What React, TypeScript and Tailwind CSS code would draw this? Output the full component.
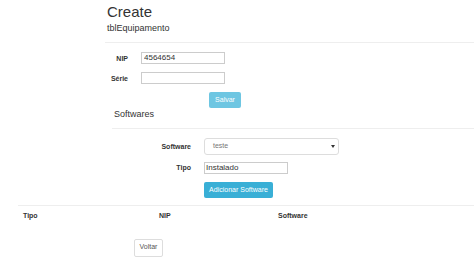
import React from 'react'

const font = { fontFamily: '"Liberation Sans", Arial, sans-serif' }

const App = () => {
  return (
    <div
      className="h-[271px] w-[474px] overflow-hidden bg-white text-[#333]"
      style={font}
    >
      {/* heading */}
      <div className="pl-[107px] pt-[3px]">
        <h2 className="text-[15px] leading-[18px]">Create</h2>
        <h4 className="mt-[2px] text-[9px] leading-[11px]">tblEquipamento</h4>
      </div>
      <hr className="ml-[105px] mt-[8px] border-t border-[#eee]" />

      {/* equipamento form */}
      <div className="mt-[9px] flex flex-col gap-[8px]">
        <div className="flex items-center">
          <label className="w-[128px] text-right text-[7px] font-bold leading-[9px]">NIP</label>
          <input
            defaultValue="4564654"
            className="ml-[13px] h-[12px] w-[84px] border border-[#ccc] px-[2px] text-[8px] text-[#333] outline-none"
          />
        </div>
        <div className="flex items-center">
          <label className="w-[128px] text-right text-[7px] font-bold leading-[9px]">Série</label>
          <input className="ml-[13px] h-[12px] w-[84px] border border-[#ccc] px-[2px] text-[8px] outline-none" />
        </div>
      </div>
      <button className="ml-[209px] mt-[8px] h-[16px] w-[32px] rounded-[2px] bg-[#6ec6e2] text-[7px] text-white">
        Salvar
      </button>

      {/* softwares */}
      <h4 className="ml-[114px] text-[9px] leading-[11px]">Softwares</h4>
      <hr className="ml-[112px] mt-[8px] border-t border-[#eee]" />

      <div className="mt-[9px] flex flex-col gap-[7px]">
        <div className="flex items-center">
          <label className="w-[191px] text-right text-[7px] font-bold leading-[9px]">Software</label>
          <div className="ml-[13px] flex h-[17px] w-[135px] items-center justify-between rounded-[3px] border border-[#ddd] pl-[8px] pr-[3px] text-[7px] text-[#777]">
            <span>teste</span>
            <svg width="4" height="3" viewBox="0 0 4 3">
              <path d="M0 0 L4 0 L2 3 Z" fill="#333" />
            </svg>
          </div>
        </div>
        <div className="flex items-center">
          <label className="w-[191px] text-right text-[7px] font-bold leading-[9px]">Tipo</label>
          <input
            defaultValue="Instalado"
            className="ml-[13px] h-[12px] w-[84px] border border-[#ccc] px-[1px] text-[8px] text-[#333] outline-none"
          />
        </div>
      </div>
      <button className="ml-[204px] mt-[8px] h-[16px] w-[69px] rounded-[2px] bg-[#39afd6] text-[7px] text-white">
        Adicionar Software
      </button>

      {/* table */}
      <hr className="ml-[18px] mt-[6px] border-t border-[#eee]" />
      <div className="mt-[5px] flex text-[7px] font-bold leading-[9px]">
        <span className="ml-[23px] w-[136px]">Tipo</span>
        <span className="w-[119px]">NIP</span>
        <span>Software</span>
      </div>

      <button className="ml-[134px] mt-[19px] h-[18px] w-[29px] rounded-[2px] border border-[#ddd] bg-white text-[7px] text-[#555]">
        Voltar
      </button>
    </div>
  )
}

export default App
